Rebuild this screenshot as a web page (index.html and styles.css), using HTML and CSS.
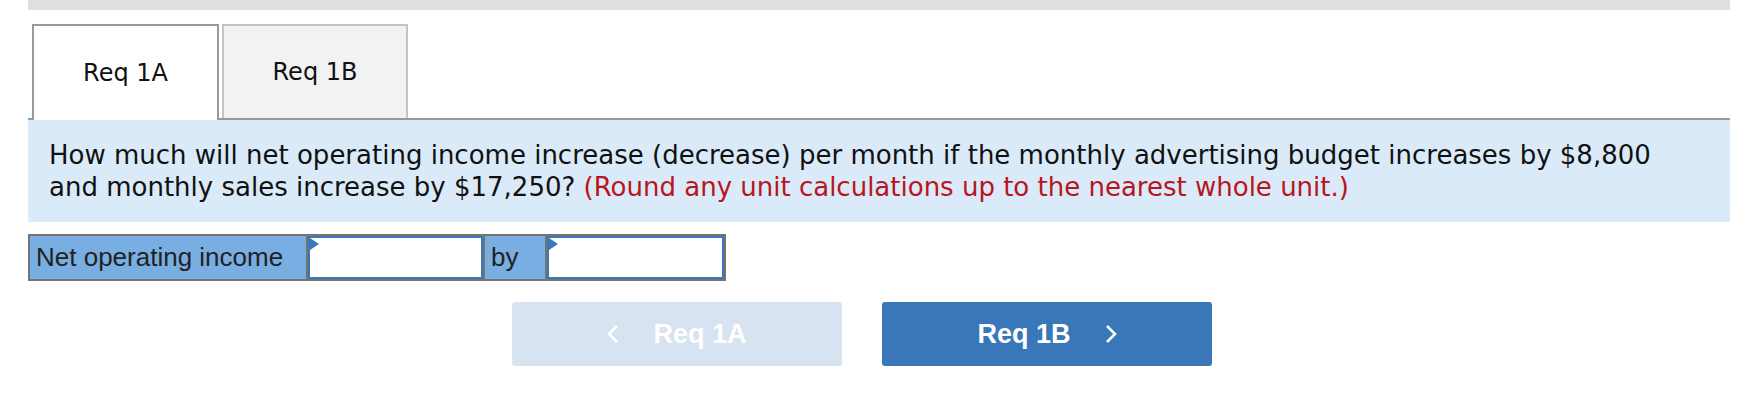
FILE: index.html
```html
<!DOCTYPE html>
<html lang="en">
<head>
    <meta charset="UTF-8">
    <meta name="viewport" content="width=device-width, initial-scale=1.0">
    <title>Req 1A</title>
    <link rel="stylesheet" href="styles.css">
</head>
<body>
    <div class="page">
        <div class="topbar"></div>

        <div class="tabs">
            <button class="tab active">Req 1A</button>
            <button class="tab">Req 1B</button>
        </div>

        <div class="question">
            How much will net operating income increase (decrease) per month if the monthly advertising budget increases by $8,800<br>
            and monthly sales increase by $17,250? <span class="hint">(Round any unit calculations up to the nearest whole unit.)</span>
        </div>

        <div class="answer">
            <div class="cell label">Net operating income</div>
            <div class="cell field"><input type="text"></div>
            <div class="cell label by">by</div>
            <div class="cell field wide"><input type="text"></div>
        </div>

        <div class="nav">
            <button class="nav-btn prev" disabled>
                <svg width="12" height="20" viewBox="0 0 12 20"><polyline points="10,2 2,10 10,18" fill="none" stroke="#fff" stroke-width="2.5"/></svg>
                <span>Req 1A</span>
            </button>
            <button class="nav-btn next">
                <span>Req 1B</span>
                <svg width="12" height="20" viewBox="0 0 12 20"><polyline points="2,2 10,10 2,18" fill="none" stroke="#fff" stroke-width="2.5"/></svg>
            </button>
        </div>
    </div>
</body>
</html>
```

FILE: styles.css
```css
:root {
    --line-color: #999;
    --panel-color: #daeaf8;
    --field-blue: #3b78b8;
    --label-blue: #78aee2;
}

body {
    margin: 0;
    background: white;
    color: #111;
    font-family: "DejaVu Sans", Verdana, sans-serif;
}

.page {
    width: 1702px;
    margin-left: 28px;
}

.topbar {
    height: 10px;
    background: #dfdfdf;
}

.tabs {
    display: flex;
    align-items: flex-end;
    gap: 3px;
    margin-top: 14px;
    padding-left: 4px;
    border-bottom: 2px solid var(--line-color);
}

.tab {
    width: 186px;
    height: 94px;
    padding: 0;
    border: 2px solid #c4c4c4;
    border-bottom: none;
    background: #f2f2f2;
    color: #111;
    font-family: "DejaVu Sans", Verdana, sans-serif;
    font-size: 24px;
    cursor: pointer;
}

.tab.active {
    width: 187px;
    height: 96px;
    margin-bottom: -2px;
    border-color: var(--line-color);
    background: white;
}

.question {
    padding: 19px 21px;
    background: var(--panel-color);
    font-size: 26px;
    line-height: 32px;
    white-space: nowrap;
}

.hint {
    color: #b8151c;
}

.answer {
    display: flex;
    width: 694px;
    height: 43px;
    margin-top: 12px;
    border: 2px solid #737373;
    font-family: "Liberation Sans", Arial, sans-serif;
}

.cell {
    border-left: 2px solid #737373;
}

.cell:first-child {
    border-left: none;
}

.label {
    width: 270px;
    padding-left: 6px;
    background: var(--label-blue);
    color: #222;
    font-size: 26px;
    line-height: 43px;
}

.label.by {
    width: 54px;
}

.field {
    position: relative;
    width: 175px;
}

.field.wide {
    width: 177px;
}

.field::before {
    content: '';
    position: absolute;
    top: 2px;
    left: 2px;
    border-left: 9px solid var(--field-blue);
    border-top: 6px solid transparent;
    border-bottom: 6px solid transparent;
}

.field input {
    box-sizing: border-box;
    width: 100%;
    height: 100%;
    margin: 0;
    border: 2px solid var(--field-blue);
    background: white;
    outline: none;
}

.nav {
    display: flex;
    gap: 40px;
    margin-top: 21px;
    padding-left: 484px;
}

.nav-btn {
    display: flex;
    align-items: center;
    justify-content: center;
    gap: 34px;
    width: 330px;
    height: 64px;
    border: none;
    border-radius: 3px;
    color: white;
    font-family: "Liberation Sans", Arial, sans-serif;
    font-size: 27px;
    font-weight: bold;
    cursor: pointer;
}

.nav-btn.prev {
    background: #d7e3f1;
    cursor: default;
}

.nav-btn.next {
    background: #3a77b8;
}
```
